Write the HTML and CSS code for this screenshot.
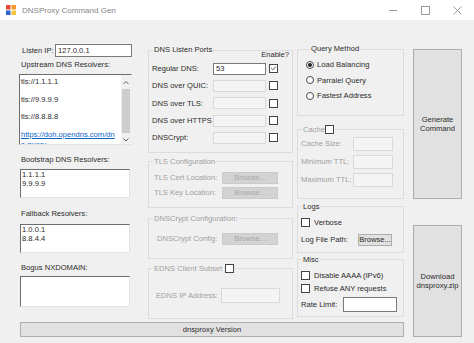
FILE: index.html
```html
<!DOCTYPE html>
<html lang="en">
<head>
  <meta charset="UTF-8" />
  <title>DNSProxy Command Gen</title>
  <link rel="stylesheet" href="styles.css">
</head>
<body>
  <div class="window">

    <!-- title bar -->
    <div class="titlebar">
      <svg class="app-icon" viewBox="0 0 10 10">
        <rect x="0" y="0" width="4.5" height="4.5" fill="#e8483a"/>
        <rect x="5.5" y="0" width="4.5" height="4.5" fill="#f39b2f"/>
        <rect x="0" y="5.5" width="4.5" height="4.5" fill="#2f62c9"/>
        <rect x="5.5" y="5.5" width="4.5" height="4.5" fill="#f5c542"/>
      </svg>
      <span class="title">DNSProxy Command Gen</span>
      <div class="controls">
        <svg class="ctl-min" viewBox="0 0 32 20"><path d="M12 10.5h8"/></svg>
        <svg class="ctl-max" viewBox="0 0 33 20"><rect x="12.5" y="6.5" width="8" height="8"/></svg>
        <svg class="ctl-close" viewBox="0 0 32 20"><path d="M11.5 6.5l8 8M19.5 6.5l-8 8"/></svg>
      </div>
    </div>

    <div class="client">

      <!-- resolvers -->
      <div class="col-left">
        <div class="ip-row">
          <label>Listen IP:</label>
          <input class="tb" type="text" value="127.0.0.1">
        </div>
        <div class="lbl lbl-upstream">Upstream DNS Resolvers:</div>
        <div class="listbox">
          <div class="items">
            <div class="item">tls://1.1.1.1</div>
            <div class="item">tls://9.9.9.9</div>
            <div class="item">tls://8.8.8.8</div>
            <div class="item"><a href="#">https://doh.opendns.com/dns-query</a></div>
          </div>
          <div class="scrollbar">
            <svg class="arrow-up" viewBox="0 0 10 14"><path d="M2.5 9l2.5-2.5 2.5 2.5"/></svg>
            <div class="thumb"></div>
            <svg class="arrow-down" viewBox="0 0 10 11"><path d="M2.5 5.5l2.5 2.5 2.5-2.5"/></svg>
          </div>
        </div>
        <div class="lbl lbl-boot">Bootstrap DNS Resolvers:</div>
        <textarea class="ta ta-boot">1.1.1.1
9.9.9.9</textarea>
        <div class="lbl lbl-fall">Fallback Resolvers:</div>
        <textarea class="ta ta-fall">1.0.0.1
8.8.4.4</textarea>
        <div class="lbl lbl-bogus">Bogus NXDOMAIN:</div>
        <textarea class="ta ta-bogus"></textarea>
      </div>

      <!-- ports and configs -->
      <div class="col-mid">
        <fieldset class="group g-ports">
          <legend>DNS Listen Ports</legend>
          <div class="enable-head">Enable?</div>
          <div class="port-row">
            <label>Regular DNS:</label>
            <input class="tb" type="text" value="53">
            <span class="chk on"><svg viewBox="0 0 9 9"><path d="M1.5 4.3l2 2 4-4.3"/></svg></span>
          </div>
          <div class="port-row">
            <label>DNS over QUIC:</label>
            <input class="tb" type="text" disabled>
            <span class="chk"></span>
          </div>
          <div class="port-row">
            <label>DNS over TLS:</label>
            <input class="tb" type="text" disabled>
            <span class="chk"></span>
          </div>
          <div class="port-row">
            <label>DNS over HTTPS</label>
            <input class="tb" type="text" disabled>
            <span class="chk"></span>
          </div>
          <div class="port-row">
            <label>DNSCrypt:</label>
            <input class="tb" type="text" disabled>
            <span class="chk"></span>
          </div>
        </fieldset>

        <fieldset class="group off g-tls">
          <legend>TLS Configuration</legend>
          <div class="cfg-row r1">
            <label>TLS Cert Location:</label>
            <button class="btn off browse-wide" disabled>Browse...</button>
          </div>
          <div class="cfg-row r2">
            <label>TLS Key Location:</label>
            <button class="btn off browse-wide" disabled>Browse...</button>
          </div>
        </fieldset>

        <fieldset class="group off g-crypt">
          <legend>DNSCrypt Configuration:</legend>
          <div class="cfg-row">
            <label>DNSCrypt Config:</label>
            <button class="btn off browse-wide" disabled>Browse...</button>
          </div>
        </fieldset>

        <fieldset class="group off g-edns">
          <legend>EDNS Client Subset <span class="chk"></span></legend>
          <div class="cfg-row">
            <label>EDNS IP Address:</label>
            <input class="tb" type="text" disabled>
          </div>
        </fieldset>
      </div>

      <!-- options -->
      <div class="col-right">
        <fieldset class="group g-query">
          <legend>Query Method</legend>
          <div class="radio-row"><span class="radio on"></span>Load Balancing</div>
          <div class="radio-row"><span class="radio"></span>Parralel Query</div>
          <div class="radio-row"><span class="radio"></span>Fastest Address</div>
        </fieldset>

        <fieldset class="group off g-cache">
          <legend>Cache<span class="chk"></span></legend>
          <div class="cache-row">
            <label>Cache Size:</label>
            <input class="tb" type="text" disabled>
          </div>
          <div class="cache-row">
            <label>Minimum TTL:</label>
            <input class="tb" type="text" disabled>
          </div>
          <div class="cache-row">
            <label>Maximum TTL:</label>
            <input class="tb" type="text" disabled>
          </div>
        </fieldset>

        <fieldset class="group g-logs">
          <legend>Logs</legend>
          <div class="check-row"><span class="chk"></span>Verbose</div>
          <div class="logs-row">
            <label>Log File Path:</label>
            <button class="btn">Browse...</button>
          </div>
        </fieldset>

        <fieldset class="group g-misc">
          <legend>Misc</legend>
          <div class="check-row"><span class="chk"></span>Disable AAAA (IPv6)</div>
          <div class="check-row"><span class="chk"></span>Refuse ANY requests</div>
          <div class="rate-row">
            <label>Rate Limit:</label>
            <input class="tb" type="text">
          </div>
        </fieldset>
      </div>

      <div class="col-buttons">
        <button class="big-btn gen">Generate<br>Command</button>
        <button class="big-btn dl">Download<br>dnsproxy.zip</button>
      </div>

      <button class="big-btn version">dnsproxy Version</button>
    </div>
  </div>
</body>
</html>
```

FILE: styles.css
```css
* { box-sizing: border-box; }
html, body {
  margin: 0; padding: 0;
}
body {
  font-family: "Liberation Sans", Arial, sans-serif;
  font-size: 7.6px;
  color: #2b2b2b;
  background: #f0f0f0;
}
.window {
  width: 474px;
  height: 343px;
  overflow: hidden;
  background: #f0f0f0;
}

/* title bar */
.titlebar {
  height: 20px;
  background: #fff;
  display: flex;
  align-items: center;
}
.app-icon {
  width: 10px; height: 10px;
  margin-left: 6px;
}
.title {
  margin-left: 6px;
  font-size: 8px;
  color: #858585;
}
.controls {
  margin-left: auto;
  display: flex;
}
.controls svg {
  height: 20px;
  fill: none;
  stroke: #9a9a9a;
  stroke-width: 1;
}
.ctl-min, .ctl-close { width: 32px; }
.ctl-max { width: 33px; }

/* main form grid */
.client {
  display: grid;
  grid-template-columns: 129px 149px 116px 49px;
  grid-template-rows: 277px 15px;
  row-gap: 2px;
  padding: 23px 0 0 19px;
}

/* common controls */
.tb {
  font: inherit;
  color: #2b2b2b;
  background: #fff;
  border: 1px solid #7a7a7a;
  padding: 0 2px;
  margin: 0;
  outline: none;
  height: 13px;
}
.tb:disabled {
  background: #f4f4f4;
  border-color: #d9d9d9;
}
.chk {
  display: inline-flex;
  width: 9px; height: 9px;
  border: 1px solid #444;
  background: #fff;
  flex: none;
}
.chk svg {
  width: 7px; height: 7px;
  fill: none;
  stroke: #333;
  stroke-width: 1.1;
}
.radio {
  display: flex;
  align-items: center;
  justify-content: center;
  width: 8px; height: 8px;
  border: 1px solid #444;
  border-radius: 50%;
  background: #fff;
  margin-right: 3px;
  flex: none;
}
.radio.on::after {
  content: "";
  width: 4px; height: 4px;
  border-radius: 50%;
  background: #222;
}
.btn {
  font: inherit;
  margin: 0; padding: 0;
  height: 12px;
  border: 1px solid #adadad;
  background: #e1e1e1;
  color: #2b2b2b;
}
.btn.off {
  background: #d3d3d3;
  border-color: #cacaca;
  color: #a8a8a8;
}
.big-btn {
  font: inherit;
  margin: 0; padding: 0;
  background: #e1e1e1;
  border: 1px solid #adadad;
  color: #2b2b2b;
  line-height: 9.5px;
}

/* left column */
.col-left {
  display: flex;
  flex-direction: column;
  width: 114px;
}
.ip-row {
  display: flex;
  align-items: center;
  height: 13px;
  margin-top: 1px;
}
.ip-row label {
  width: 36px;
  padding-left: 3px;
}
.ip-row .tb { width: 77px; }
.lbl {
  line-height: 10px;
  padding-left: 2px;
}
.lbl-upstream { margin-top: 3px; }
.lbl-boot { margin-top: 10px; }
.lbl-fall { margin-top: 11px; }
.lbl-bogus { margin-top: 10px; }

.listbox {
  display: flex;
  margin-top: 4px;
  width: 113px;
  height: 71px;
  background: #fff;
  border: 1px solid;
  border-color: #6d6d6d #f0f0f0 #e3e3e3 #6d6d6d;
  overflow: hidden;
}
.items {
  flex: 1;
  min-width: 0;
  padding: 0 4px 0 1px;
}
.item {
  height: 17.5px;
  padding-top: 2px;
  line-height: 10px;
  word-break: break-all;
}
.item a {
  color: #0b63c4;
  text-decoration: underline;
}
.scrollbar {
  width: 10px;
  display: flex;
  flex-direction: column;
  align-items: center;
  background: #f0f0f0;
}
.scrollbar svg {
  width: 10px;
  fill: none;
  stroke: #606060;
  stroke-width: 1;
}
.arrow-up { height: 14px; }
.arrow-down { height: 11px; }
.thumb {
  flex: 1;
  width: 8px;
  background: #cdcdcd;
}

.ta {
  display: block;
  font: inherit;
  color: #2b2b2b;
  resize: none;
  overflow: hidden;
  outline: none;
  margin: 0 0 0 1px;
  width: 110px;
  padding: 0 1px;
  line-height: 9px;
  background: #fff;
  border: 1px solid;
  border-color: #6d6d6d #e3e3e3 #e3e3e3 #6d6d6d;
}
.ta-boot { margin-top: 4px; height: 29px; }
.ta-fall { margin-top: 5px; height: 29px; }
.ta-bogus { margin-top: 3px; height: 31px; }

/* group boxes */
.col-mid, .col-right {
  display: flex;
  flex-direction: column;
}
.col-mid { width: 145px; }
.col-right { width: 107px; }
.group {
  margin: 0;
  padding: 0;
  min-width: 0;
  border: 1px solid #dcdcdc;
}
.group legend {
  display: flex;
  align-items: center;
  height: 10px;
  line-height: 10px;
  padding: 0 1px;
  margin-left: 4px;
}
.group.off legend,
.group.off label { color: #a0a0a0; }

.g-ports { margin-top: 2px; padding-bottom: 6px; }
.enable-head {
  margin-top: -5px;
  height: 10px;
  line-height: 10px;
  text-align: right;
  padding-right: 3px;
}
.port-row {
  display: flex;
  align-items: center;
  height: 17.3px;
  padding-left: 3px;
}
.port-row label { width: 61px; white-space: nowrap; }
.port-row .tb { width: 53px; height: 12px; }
.port-row .chk { margin-left: 3px; }

.cfg-row {
  display: flex;
  align-items: center;
  height: 14px;
}
.cfg-row label { width: 73px; white-space: nowrap; }
.browse-wide { width: 56px; }

.g-tls { margin-top: 3.5px; padding-bottom: 7px; }
.g-tls .r1 { margin-top: 4px; }
.g-tls .r2 { margin-top: 1px; }
.g-tls label { padding-left: 5px; }

.g-crypt { margin-top: 6px; padding-bottom: 12px; }
.g-crypt .cfg-row { margin-top: 8px; }
.g-crypt label { padding-left: 8px; }

.g-edns { margin-top: 5px; padding-bottom: 15px; }
.g-edns legend .chk { margin-left: 3px; }
.g-edns .cfg-row { margin-top: 14px; height: 15px; }
.g-edns label { width: 72px; padding-left: 7px; }
.g-edns .tb { width: 59px; height: 15px; }

/* right column */
.g-query {
  margin-top: 1px;
  padding: 3px 0 11px 8px;
}
.radio-row {
  display: flex;
  align-items: center;
  height: 15.6px;
}

.g-cache {
  margin-top: 9px;
  padding: 2px 0 11px 0;
}
.cache-row {
  display: flex;
  align-items: center;
  height: 14px;
}
.cache-row + .cache-row { margin-top: 4px; }
.cache-row label { width: 55px; padding-left: 3px; white-space: nowrap; }
.cache-row .tb { width: 40px; height: 14px; }

.check-row {
  display: flex;
  align-items: center;
  padding-left: 3px;
}
.check-row .chk { margin-right: 4px; }

.g-logs {
  margin-top: 3px;
  padding: 4px 0 5px 0;
}
.g-logs .check-row { height: 14px; }
.logs-row {
  display: flex;
  align-items: center;
  height: 14px;
  margin-top: 3px;
}
.logs-row label { width: 60px; padding-left: 3px; white-space: nowrap; }
.logs-row .btn { width: 34px; }

.g-misc {
  margin-top: 2px;
  padding: 5px 0 4px 0;
}
.g-misc .check-row { height: 12px; }
.g-misc .check-row + .check-row { margin-top: 1px; }
.rate-row {
  display: flex;
  align-items: center;
  height: 15px;
  margin-top: 2px;
}
.rate-row label { width: 45px; padding-left: 3px; }
.rate-row .tb { width: 54px; height: 15px; }

/* big buttons */
.col-buttons {
  grid-column: 4;
  grid-row: 1 / 3;
  display: flex;
  flex-direction: column;
}
.gen { margin-top: 6px; height: 150px; }
.dl { margin-top: auto; height: 112px; }
.version {
  grid-column: 1 / 4;
  grid-row: 2;
  margin: 0 9px 0 1px;
  height: 15px;
}
```
